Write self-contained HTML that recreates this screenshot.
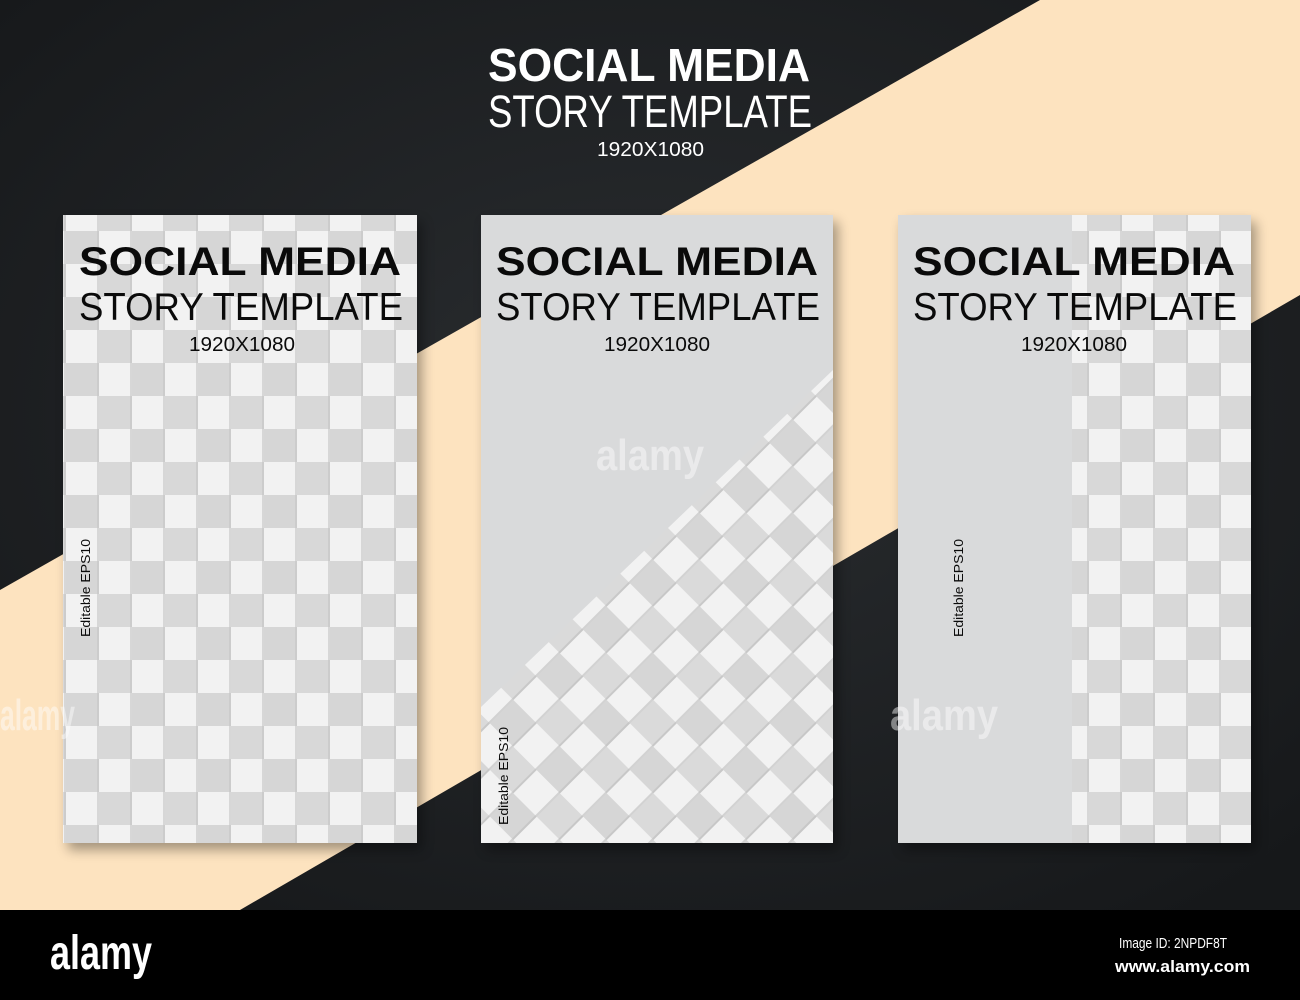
<!DOCTYPE html>
<html><head><meta charset="utf-8"><style>html,body{margin:0;padding:0;background:#000}svg{display:block}</style></head>
<body>
<svg width="1300" height="1000" viewBox="0 0 1300 1000" xmlns="http://www.w3.org/2000/svg" font-family="Liberation Sans, sans-serif">
<defs>
  <radialGradient id="bg" cx="0.5" cy="0.45" r="0.7">
    <stop offset="0" stop-color="#2a2d30"/><stop offset="1" stop-color="#16181a"/>
  </radialGradient>
  <pattern id="chk" width="66" height="66" patternUnits="userSpaceOnUse">
    <rect width="66" height="66" fill="#e4e4e4"/>
    <rect x="0" y="0" width="33" height="33" fill="#f2f2f2"/>
    <rect x="33" y="33" width="33" height="33" fill="#f2f2f2"/>
    <rect x="33" y="0" width="33" height="33" fill="#d8d8d8"/>
    <rect x="0" y="33" width="33" height="33" fill="#d6d6d6"/>
    <rect x="31" y="0" width="2" height="66" fill="#c4c4c4" opacity="0.6"/>
    <rect x="64" y="0" width="2" height="66" fill="#c4c4c4" opacity="0.6"/>
  </pattern>
  <pattern id="chk2" x="0" y="0" width="66" height="66" patternUnits="userSpaceOnUse" patternTransform="rotate(-45)">
    <rect width="66" height="66" fill="#e4e4e4"/>
    <rect x="0" y="0" width="33" height="33" fill="#f2f2f2"/>
    <rect x="33" y="33" width="33" height="33" fill="#f2f2f2"/>
    <rect x="33" y="0" width="33" height="33" fill="#d6d6d6"/>
    <rect x="0" y="33" width="33" height="33" fill="#dadada"/>
    <rect x="0" y="31" width="66" height="2" fill="#bdbdbd" opacity="0.6"/>
    <rect x="0" y="64" width="66" height="2" fill="#bdbdbd" opacity="0.6"/>
  </pattern>
  <filter id="sh" x="-10%" y="-10%" width="130%" height="130%"><feGaussianBlur stdDeviation="6"/></filter>
</defs>
<rect width="1300" height="910" fill="url(#bg)"/>
<polygon points="1040,0 1300,0 1300,295 240,910 0,910 0,590" fill="#fde3bf"/>
<rect y="910" width="1300" height="90" fill="#000"/>

<rect x="68" y="222" width="354" height="628" fill="#000" opacity="0.35" filter="url(#sh)"/>
<rect x="486" y="222" width="352" height="628" fill="#000" opacity="0.35" filter="url(#sh)"/>
<rect x="903" y="222" width="353" height="628" fill="#000" opacity="0.35" filter="url(#sh)"/>

<rect x="63" y="215" width="354" height="628" fill="url(#chk)"/>
<rect x="481" y="215" width="352" height="628" fill="#d9dadb"/>
<polygon points="833,370 833,843 481,843 481,707" fill="url(#chk2)"/>
<rect x="898" y="215" width="353" height="628" fill="#d9dadb"/>
<rect x="1072" y="215" width="179" height="628" fill="url(#chk)"/>

<g fill="#0a0a0a">
  <text x="79" y="275" font-size="40" font-weight="bold" textLength="322" lengthAdjust="spacingAndGlyphs">SOCIAL MEDIA</text>
  <text x="79" y="320" font-size="39" textLength="324" lengthAdjust="spacingAndGlyphs">STORY TEMPLATE</text>
  <text x="189" y="351" font-size="20" textLength="106" lengthAdjust="spacingAndGlyphs">1920X1080</text>
  <text x="496" y="275" font-size="40" font-weight="bold" textLength="322" lengthAdjust="spacingAndGlyphs">SOCIAL MEDIA</text>
  <text x="496" y="320" font-size="39" textLength="324" lengthAdjust="spacingAndGlyphs">STORY TEMPLATE</text>
  <text x="604" y="351" font-size="20" textLength="106" lengthAdjust="spacingAndGlyphs">1920X1080</text>
  <text x="913" y="275" font-size="40" font-weight="bold" textLength="322" lengthAdjust="spacingAndGlyphs">SOCIAL MEDIA</text>
  <text x="913" y="320" font-size="39" textLength="324" lengthAdjust="spacingAndGlyphs">STORY TEMPLATE</text>
  <text x="1021" y="351" font-size="20" textLength="106" lengthAdjust="spacingAndGlyphs">1920X1080</text>
  <text transform="translate(90,637) rotate(-90)" font-size="13" textLength="98" lengthAdjust="spacingAndGlyphs">Editable EPS10</text>
  <text transform="translate(508,825) rotate(-90)" font-size="13" textLength="98" lengthAdjust="spacingAndGlyphs">Editable EPS10</text>
  <text transform="translate(963,637) rotate(-90)" font-size="13" textLength="98" lengthAdjust="spacingAndGlyphs">Editable EPS10</text>
</g>

<g fill="#ffffff">
  <text x="488" y="81" font-size="46" font-weight="bold" textLength="322" lengthAdjust="spacingAndGlyphs">SOCIAL MEDIA</text>
  <text x="488" y="127" font-size="45" textLength="324" lengthAdjust="spacingAndGlyphs">STORY TEMPLATE</text>
  <text x="597" y="156" font-size="20" textLength="107" lengthAdjust="spacingAndGlyphs">1920X1080</text>
</g>

<g fill="#ffffff" opacity="0.45" font-weight="bold">
  <text x="596" y="470" font-size="44" textLength="108" lengthAdjust="spacingAndGlyphs">alamy</text>
  <text x="0" y="730" font-size="44" textLength="75" lengthAdjust="spacingAndGlyphs">alamy</text>
  <text x="890" y="730" font-size="44" textLength="108" lengthAdjust="spacingAndGlyphs">alamy</text>
</g>

<text x="50" y="969" fill="#fff" font-size="48" font-weight="bold" textLength="102" lengthAdjust="spacingAndGlyphs">alamy</text>
<text x="1119" y="948" fill="#fff" font-size="15" textLength="108" lengthAdjust="spacingAndGlyphs">Image ID: 2NPDF8T</text>
<text x="1115" y="972" fill="#fff" font-size="17" font-weight="bold" textLength="135" lengthAdjust="spacingAndGlyphs">www.alamy.com</text>
</svg>
</body></html>
